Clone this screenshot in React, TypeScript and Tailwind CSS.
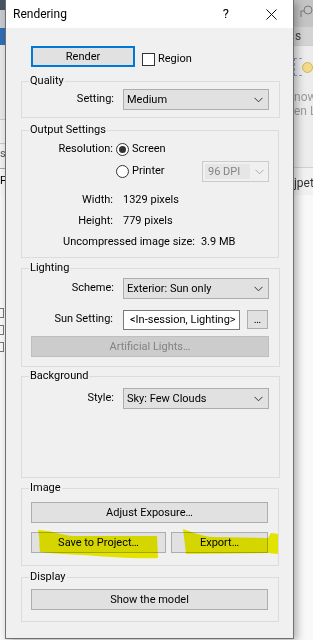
import React from "react";

const font = { fontFamily: "Roboto, 'Noto Sans', 'Liberation Sans', sans-serif" };

function Chevron({ color = "#333" }: { color?: string }) {
  return (
    <svg width="9" height="6" viewBox="0 0 9 6" className="shrink-0">
      <path d="M0.5 0.8 L4.5 4.8 L8.5 0.8" fill="none" stroke={color} strokeWidth="1" />
    </svg>
  );
}

function Dropdown({ value }: { value: string }) {
  return (
    <div className="ml-[9px] w-[146px] h-[21px] shrink-0 border border-[#adadad] bg-[#e1e1e1] flex items-center pl-[3px] pr-[5px]">
      <span className="flex-1 leading-[16px]">{value}</span>
      <Chevron />
    </div>
  );
}

function Btn({ label, className = "" }: { label: string; className?: string }) {
  return (
    <div className={`h-[21px] border border-[#adadad] bg-[#e1e1e1] flex items-center justify-center leading-[16px] ${className}`}>
      {label}
    </div>
  );
}

function Group({ title, className = "", children }: { title: string; className?: string; children: React.ReactNode }) {
  return (
    <fieldset className={`ml-[15px] w-[258px] border border-[#dcdcdc] pl-[9px] pr-[10px] ${className}`}>
      <legend className="ml-[-2px] px-[1px] leading-[16px]">{title}</legend>
      {children}
    </fieldset>
  );
}

function Radio({ checked }: { checked?: boolean }) {
  return (
    <div className="w-[13px] h-[13px] rounded-full border border-[#333] bg-white flex items-center justify-center shrink-0">
      {checked ? <div className="w-[7px] h-[7px] rounded-full bg-[#333]" /> : null}
    </div>
  );
}

function LeftStrip() {
  return (
    <div className="w-[5px] shrink-0 flex flex-col overflow-hidden">
      <div className="h-[10px] bg-[#4a5561]" />
      <div className="h-[18px] bg-[#c6c9cd]" />
      <div className="h-[17px] bg-[#2f6db3]" />
      <div className="h-[74px] bg-[#e6e6e6]" />
      <div className="h-[24px] bg-[#eeeeee] border-t border-[#c8c8c8]" />
      <div className="h-[25px] bg-[#f0f0f0] border-t border-[#c8c8c8] text-[11px] leading-[20px] text-[#555]">s</div>
      <div className="h-[28px] bg-[#f4f4f4] border-t border-[#a8a8a8] text-[11px] leading-[24px]">P</div>
      <div className="flex-1 bg-[#f7f7f7] flex flex-col gap-[7px] pt-[112px]">
        <div className="w-[4px] h-[10px] border border-[#777] border-l-0" />
        <div className="w-[4px] h-[10px] border border-[#777] border-l-0" />
        <div className="w-[4px] h-[10px] border border-[#777] border-l-0" />
      </div>
    </div>
  );
}

function RightStrip() {
  return (
    <div className="flex-1 flex flex-col text-[12px] overflow-hidden">
      <div className="h-[27px] bg-[#c4c4c4] pl-[5px] pt-[4px]">
        <svg width="14" height="14" viewBox="0 0 14 14">
          <circle cx="9" cy="6" r="4" fill="none" stroke="#7a7a7a" />
          <path d="M2 13 V7 H5" fill="none" stroke="#7a7a7a" />
        </svg>
      </div>
      <div className="h-[18px] bg-[#d3d3d3] text-[#444] leading-[18px] pl-[1px]">s</div>
      <div className="h-[122px] bg-[#ececec] border-t border-[#cfcfcf] pt-[12px]">
        <div className="flex items-center">
          <div className="w-[8px] h-[18px] border-y border-l border-dashed border-[#8aa0c0]" />
          <div className="w-[11px] h-[11px] rounded-full bg-[#f3d98a] border border-[#d6b45a]" />
        </div>
        <div className="mt-[14px] leading-[14px] text-[#9a9a9a] whitespace-nowrap">now</div>
        <div className="leading-[14px] text-[#9a9a9a] whitespace-nowrap">en L</div>
      </div>
      <div className="h-[28px] bg-[#f1f1f1] border-t border-[#d0d0d0] leading-[30px] text-[#333] whitespace-nowrap">jpet</div>
      <div className="flex-1 bg-[#f8f8f8]" />
    </div>
  );
}

export default function App() {
  return (
    <div className="relative w-[313px] h-[640px] overflow-hidden flex bg-[#f8f8f8] text-[11px] text-black" style={font}>
      <LeftStrip />

      <div className="w-[289px] h-[639px] shrink-0 flex flex-col border-x border-b border-[#707070] shadow-[3px_2px_8px_rgba(0,0,0,0.3)] z-10">
        {/* title bar */}
        <div className="h-[28px] bg-white flex items-center pl-[7px] pr-[16px]">
          <span className="text-[12px] leading-[16px]">Rendering</span>
          <span className="ml-auto text-[13px] leading-[16px]">?</span>
          <svg width="11" height="11" viewBox="0 0 11 11" className="ml-[37px]">
            <path d="M0.5 0.5 L10.5 10.5 M10.5 0.5 L0.5 10.5" stroke="#111" strokeWidth="1" />
          </svg>
        </div>

        <div className="flex-1 bg-[#f0f0f0] flex flex-col">
          <div className="mt-[18px] ml-[25px] flex items-end">
            <div className="w-[104px] h-[21px] border-2 border-[#0078d7] bg-[#e1e1e1] flex items-center justify-center leading-[16px]">
              Render
            </div>
            <div className="ml-[7px] w-[13px] h-[13px] border border-[#333] bg-white mb-[1px]" />
            <span className="ml-[3px] leading-[16px]">Region</span>
          </div>

          <Group title="Quality" className="mt-[6px] pb-[7px]">
            <div className="flex items-center h-[21px]">
              <span className="w-[83px] text-right">Setting:</span>
              <Dropdown value="Medium" />
            </div>
          </Group>

          <Group title="Output Settings" className="mt-[4px] pb-[4px]">
            <div className="flex items-center h-[21px] mt-[1px]">
              <span className="w-[82px] text-right">Resolution:</span>
              <div className="ml-[3px]"><Radio checked /></div>
              <span className="ml-[3px]">Screen</span>
            </div>
            <div className="flex items-center h-[21px] mt-[1px] pl-[85px]">
              <Radio />
              <span className="ml-[3px]">Printer</span>
              <div className="ml-auto -mr-[1px] w-[67px] h-[21px] border border-[#cccccc] bg-[#f0f0f0] flex items-center pl-[2px] pr-[4px]">
                <span className="w-[45px] h-[15px] bg-[#e6e6e6] text-[#838383] leading-[15px] pl-[3px]">96 DPI</span>
                <span className="ml-auto"><Chevron color="#a8a8a8" /></span>
              </div>
            </div>
            <div className="flex items-center h-[21px] mt-[8px]">
              <span className="w-[82px] text-right">Width:</span>
              <span className="ml-[10px]">1329 pixels</span>
            </div>
            <div className="flex items-center h-[21px]">
              <span className="w-[82px] text-right">Height:</span>
              <span className="ml-[10px]">779 pixels</span>
            </div>
            <div className="flex items-center h-[21px] pl-[32px]">
              <span>Uncompressed image size:</span>
              <span className="ml-[6px]">3.9 MB</span>
            </div>
          </Group>

          <Group title="Lighting" className="mt-[2px] pb-[9px]">
            <div className="flex items-center h-[21px] mt-[2px]">
              <span className="w-[83px] text-right">Scheme:</span>
              <Dropdown value="Exterior: Sun only" />
            </div>
            <div className="flex items-center h-[21px] mt-[10px]">
              <span className="w-[82px] text-right">Sun Setting:</span>
              <div className="ml-[10px] w-[117px] h-[20px] border border-[#7a7a7a] bg-white flex items-center pl-[6px] leading-[16px] whitespace-nowrap">
                &lt;In-session, Lighting&gt;
              </div>
              <div className="ml-[7px] w-[21px] h-[19px] border border-[#adadad] bg-[#e1e1e1] flex items-center justify-center leading-[14px]">
                …
              </div>
            </div>
            <div className="mt-[6px] h-[21px] border border-[#bfbfbf] bg-[#cccccc] text-[#838383] flex items-center justify-center leading-[16px]">
              Artificial Lights…
            </div>
          </Group>

          <Group title="Background" className="mt-[1px] pb-[68px]">
            <div className="flex items-center h-[21px] mt-[4px]">
              <span className="w-[83px] text-right">Style:</span>
              <Dropdown value="Sky: Few Clouds" />
            </div>
          </Group>

          <Group title="Image" className="mt-[2px] pb-[12px]">
            <Btn label="Adjust Exposure…" className="mt-[6px]" />
            <div className="mt-[9px] flex gap-[5px]">
              <Btn label="Save to Project…" className="w-[135px]" />
              <Btn label="Export…" className="w-[97px]" />
            </div>
          </Group>

          <Group title="Display" className="mt-[3px] pb-[11px]">
            <Btn label="Show the model" className="mt-[4px]" />
          </Group>
        </div>
      </div>

      <RightStrip />

      {/* yellow marker scribbles */}
      <svg
        className="absolute left-0 top-[520px] z-20 pointer-events-none mix-blend-multiply"
        width="313"
        height="45"
        viewBox="0 520 313 45"
      >
        <path
          d="M38 530 C48 530 58 534 72 536 L157 536 L158 558 C140 559 110 557 82 555 C62 554 48 553 40 552 C39 545 40 538 38 530 Z"
          fill="#f2f200"
        />
        <path
          d="M183 529 C190 531 200 536 212 537 L268 538 L271 533 L278 534 L278 554 L268 553 L186 554 C185 545 184 537 183 529 Z"
          fill="#f2f200"
        />
      </svg>
    </div>
  );
}
